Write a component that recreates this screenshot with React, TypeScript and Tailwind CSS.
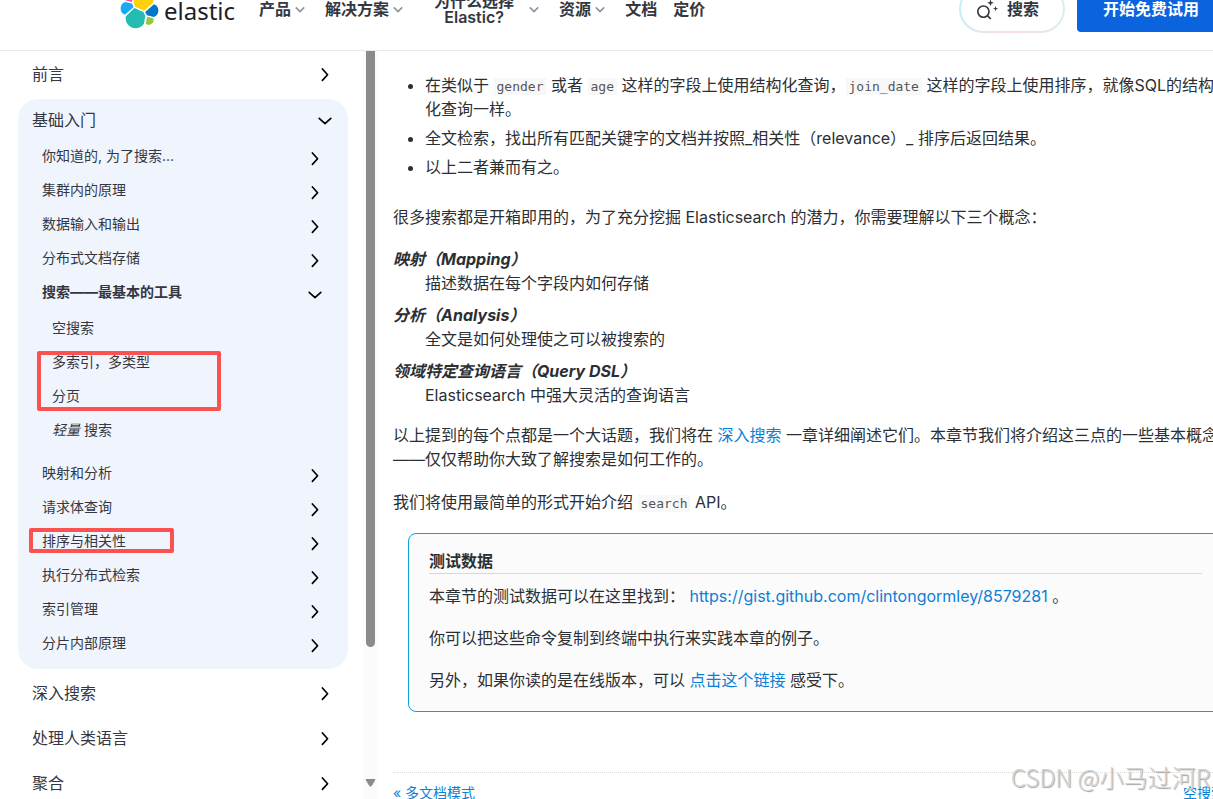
import React from 'react';

type NavItem = {
  title: string;
  open?: boolean;
  leaf?: boolean;
};

const beforeItems: NavItem[] = [
  { title: '你知道的, 为了搜索...' },
  { title: '集群内的原理' },
  { title: '数据输入和输出' },
  { title: '分布式文档存储' },
];

const afterItems: NavItem[] = [
  { title: '执行分布式检索' },
  { title: '索引管理' },
  { title: '分片内部原理' },
];

const chapters = ['深入搜索', '处理人类语言', '聚合'];

const Chevron: React.FC<{ open?: boolean }> = ({ open }) => (
  <svg className="h-4 w-4 shrink-0" viewBox="0 0 16 16" fill="none" stroke="#000" strokeWidth="1.7" strokeLinecap="round" strokeLinejoin="round">
    <path d={open ? 'M2.2 6.4 L8 11.6 L13.8 6.4' : 'M5.4 3 L10.6 8.7 L5.4 14.4'} />
  </svg>
);

const MenuCaret = () => (
  <svg className="h-[10px] w-[10px] shrink-0" viewBox="0 0 10 10" fill="none" stroke="#8b93a3" strokeWidth="1.6">
    <path d="M0.8 3.4 L5 7.6 L9.2 3.4" />
  </svg>
);

const Logo = () => (
  <a href="#" className="flex shrink-0 items-center gap-1 text-[#1d1e24]" aria-label="elastic">
    <svg className="h-[41px] w-[41px]" viewBox="0 0 32 32">
      <path fill="#FED10A" d="M12.58 13.787l7.002 3.211 7.066-6.213a7.849 7.849 0 00.152-1.557c0-4.287-3.478-7.765-7.762-7.765a7.772 7.772 0 00-6.423 3.4L11.436 10.97l1.144 2.817z" />
      <path fill="#24BBB1" d="M5.333 21.215c-.099.513-.149 1.033-.15 1.555 0 4.301 3.49 7.801 7.779 7.801a7.78 7.78 0 006.465-3.45l1.167-6.12-1.558-2.992-7.03-3.215-6.673 6.421z" />
      <path fill="#EF5098" d="M5.288 9.067l4.8 1.137L11.14 4.7a3.785 3.785 0 00-5.85 4.366z" />
      <path fill="#1BA9F5" d="M4.872 10.214a5.294 5.294 0 00-3.595 4.987 5.305 5.305 0 003.407 4.942l6.733-6.12-1.236-2.65-5.309-1.16z" />
      <path fill="#93C83E" d="M20.873 27.128a3.785 3.785 0 005.846-4.36l-4.796-1.126-1.05 5.486z" />
      <path fill="#0077CC" d="M21.848 20.563l5.28 1.238a5.316 5.316 0 003.595-4.988 5.303 5.303 0 00-3.404-4.936l-6.905 6.071 1.434 2.615z" />
    </svg>
    <span className="pt-1 font-['Noto_Sans',sans-serif] text-2xl">elastic</span>
  </a>
);

const SearchIcon = () => (
  <svg className="h-[24px] w-[24px]" viewBox="0 0 24 24" fill="none">
    <circle cx="8.4" cy="14.6" r="5.6" stroke="#343741" strokeWidth="1.6" />
    <path d="M12.4 18.6 L15.8 22" stroke="#343741" strokeWidth="1.7" />
    <path d="M15.5 2.4 L16.4 5 L19 5.8 L16.4 6.7 L15.5 9.3 L14.6 6.7 L12 5.8 L14.6 5z" fill="#343741" />
    <path d="M20.6 9 L21.3 11 L23.2 11.6 L21.3 12.3 L20.6 14.2 L19.9 12.3 L18 11.6 L19.9 11z" fill="#343741" />
  </svg>
);

const Header = () => (
  <header className="shrink-0 overflow-hidden border-b border-[#e9e9ec] bg-white">
    <div className="-mt-8 flex h-[82px] items-center justify-between pl-[119px]">
      <div className="flex items-center gap-6">
        <Logo />
        <nav className="flex items-center gap-5 text-base font-semibold text-[#343741]">
          <button type="button" className="flex items-center gap-1">产品<MenuCaret /></button>
          <button type="button" className="flex items-center gap-1">解决方案<MenuCaret /></button>
          <button type="button" className="flex items-center gap-1">
            <span className="w-[102px] leading-4">为什么选择 Elastic?</span>
            <MenuCaret />
          </button>
          <button type="button" className="flex items-center gap-1">资源<MenuCaret /></button>
          <div className="flex gap-4">
            <a href="#">文档</a>
            <a href="#">定价</a>
          </div>
        </nav>
      </div>
      <div className="-mr-3 flex items-center gap-3">
        <button type="button" className="rounded-full bg-gradient-to-r from-[#c5efee] via-[#fbdbe7] to-[#d5eeee] p-[2px]">
          <span className="flex h-11 items-center gap-2 rounded-full bg-white pr-6 pl-[14px] text-base font-semibold text-[#343741]">
            <SearchIcon />
            搜索
          </span>
        </button>
        <a href="#" className="flex h-[46px] items-center rounded bg-[#0b64dd] px-[26px] text-base font-bold whitespace-nowrap text-white">开始免费试用</a>
      </div>
    </div>
  </header>
);

const SubItem: React.FC<NavItem> = ({ title, open, leaf }) => (
  <a href="#" className={open ? 'flex h-[34px] items-center justify-between font-bold' : 'flex h-[34px] items-center justify-between'}>
    {title}
    {!leaf && <span className="pt-1"><Chevron open={open} /></span>}
  </a>
);

const Chapter: React.FC<{ title: string }> = ({ title }) => (
  <a href="#" className="flex h-[45px] items-center justify-between pr-[15px] pl-[14px]">
    {title}
    <Chevron />
  </a>
);

const Sidebar = () => (
  <nav className="w-[363px] shrink-0 overflow-hidden pr-[15px] pl-[18px] text-base text-[#343741]">
    <Chapter title="前言" />
    <section className="mt-[3px] mb-px rounded-[20px] bg-[#f0f4fd] pt-0.5 pb-[9px]">
      <a href="#" className="flex h-[38px] items-center justify-between pr-[15px] pl-[14px]">
        基础入门
        <Chevron open />
      </a>
      <ul className="pr-[25px] pl-6 text-sm">
        {beforeItems.map((item) => <li key={item.title}><SubItem {...item} /></li>)}
        <li>
          <SubItem title="搜索——最基本的工具" open />
          <ul className="pt-0.5 pb-[9px] pl-[10px]">
            <li><SubItem title="空搜索" leaf /></li>
            <li className="relative">
              <SubItem title="多索引，多类型" leaf />
              {/* highlight spans this row and the next */}
              <span className="pointer-events-none absolute top-[6px] -left-[15px] h-[60px] w-[184px] rounded-xs border-4 border-[#fb5151]" />
            </li>
            <li><SubItem title="分页" leaf /></li>
            <li>
              <a href="#" className="flex h-[34px] items-center gap-1"><em>轻量</em> 搜索</a>
            </li>
          </ul>
        </li>
        <li><SubItem title="映射和分析" /></li>
        <li><SubItem title="请求体查询" /></li>
        <li className="relative">
          <SubItem title="排序与相关性" />
          <span className="pointer-events-none absolute top-1 -left-[13px] h-[25px] w-[145px] rounded-xs border-4 border-[#fb5151]" />
        </li>
        {afterItems.map((item) => <li key={item.title}><SubItem {...item} /></li>)}
      </ul>
    </section>
    {chapters.map((title) => <Chapter key={title} title={title} />)}
  </nav>
);

const Scrollbar = () => (
  <div className="flex w-[15px] shrink-0 flex-col items-center justify-between bg-[#fbfbfb] pb-3" aria-hidden="true">
    <div className="h-[81%] w-[9px] rounded-b-full bg-[#8b8b8b]" />
    <svg className="h-2 w-[11px]" viewBox="0 0 11 8">
      <path d="M1 0.5 H10 L6.5 6.6 Q5.5 8 4.5 6.6 Z" fill="#8b8b8b" stroke="#8b8b8b" strokeLinejoin="round" />
    </svg>
  </div>
);

const Code: React.FC<{ children: React.ReactNode }> = ({ children }) => (
  <code className="bg-[#f8f8f8] px-[3px] py-px font-['DejaVu_Sans_Mono',monospace] text-[13px] leading-4 text-[#555]">{children}</code>
);

const Article = () => (
  <main className="-mr-6 min-w-0 flex-1 pt-[22px] pl-[15px] text-base leading-6 text-[#2b2f33]">
    <ul className="list-disc space-y-[5px] pr-4 pl-8">
      <li>在类似于 <Code>gender</Code> 或者 <Code>age</Code> 这样的字段上使用结构化查询，<Code>join_date</Code> 这样的字段上使用排序，就像SQL的结构化查询一样。</li>
      <li>全文检索，找出所有匹配关键字的文档并按照_相关性（relevance）_ 排序后返回结果。</li>
      <li>以上二者兼而有之。</li>
    </ul>
    <p className="mt-[26px]">很多搜索都是开箱即用的，为了充分挖掘 Elasticsearch 的潜力，你需要理解以下三个概念：</p>
    <dl className="mt-[18px]">
      <dt className="font-bold italic">映射（Mapping）</dt>
      <dd className="pl-8">描述数据在每个字段内如何存储</dd>
      <dt className="mt-2 font-bold italic">分析（Analysis）</dt>
      <dd className="pl-8">全文是如何处理使之可以被搜索的</dd>
      <dt className="mt-2 font-bold italic">领域特定查询语言（Query DSL）</dt>
      <dd className="pl-8">Elasticsearch 中强大灵活的查询语言</dd>
    </dl>
    <p className="mt-4">以上提到的每个点都是一个大话题，我们将在 <a href="#" className="text-[#0b7fd6]">深入搜索</a> 一章详细阐述它们。本章节我们将介绍这三点的一些基本概念——仅仅帮助你大致了解搜索是如何工作的。</p>
    <p className="mt-[19px]">我们将使用最简单的形式开始介绍 <Code>search</Code> API。</p>
    <section className="mt-[19px] mr-[14px] ml-[15px] rounded-lg border border-[#10a0dc] bg-[#fbfbfb] px-5 pt-[15px] pb-[19px]">
      <h3 className="border-b border-[#d8d8d8] font-bold">测试数据</h3>
      <p className="mt-[10px]">本章节的测试数据可以在这里找到： <a href="#" className="text-[#0b7fd6]">https://gist.github.com/clintongormley/8579281</a> 。</p>
      <p className="mt-[18px]">你可以把这些命令复制到终端中执行来实践本章的例子。</p>
      <p className="mt-[18px]">另外，如果你读的是在线版本，可以 <a href="#" className="text-[#0b7fd6]">点击这个链接</a> 感受下。</p>
    </section>
    <div className="mt-[60px] flex justify-between border-t border-dotted border-[#dcdcdc] pt-2 text-sm leading-6 text-[#0b7fd6]">
      <a href="#">« 多文档模式</a>
      <a href="#">空搜索 »</a>
    </div>
  </main>
);

export default function App() {
  return (
    <div lang="zh-CN" className="relative flex h-screen flex-col overflow-hidden bg-white font-['Inter','Noto_Sans_CJK_SC',sans-serif]">
      <Header />
      <div className="flex min-h-0 flex-1 overflow-hidden">
        <Sidebar />
        <Scrollbar />
        <Article />
      </div>
      <span className="pointer-events-none absolute right-[3px] bottom-1.5 font-['Noto_Sans_CJK_SC',sans-serif] text-2xl leading-8 font-light text-[#d4d4d4] [text-shadow:1px_1px_1px_#a0a0a0]">CSDN @小马过河R</span>
    </div>
  );
}
